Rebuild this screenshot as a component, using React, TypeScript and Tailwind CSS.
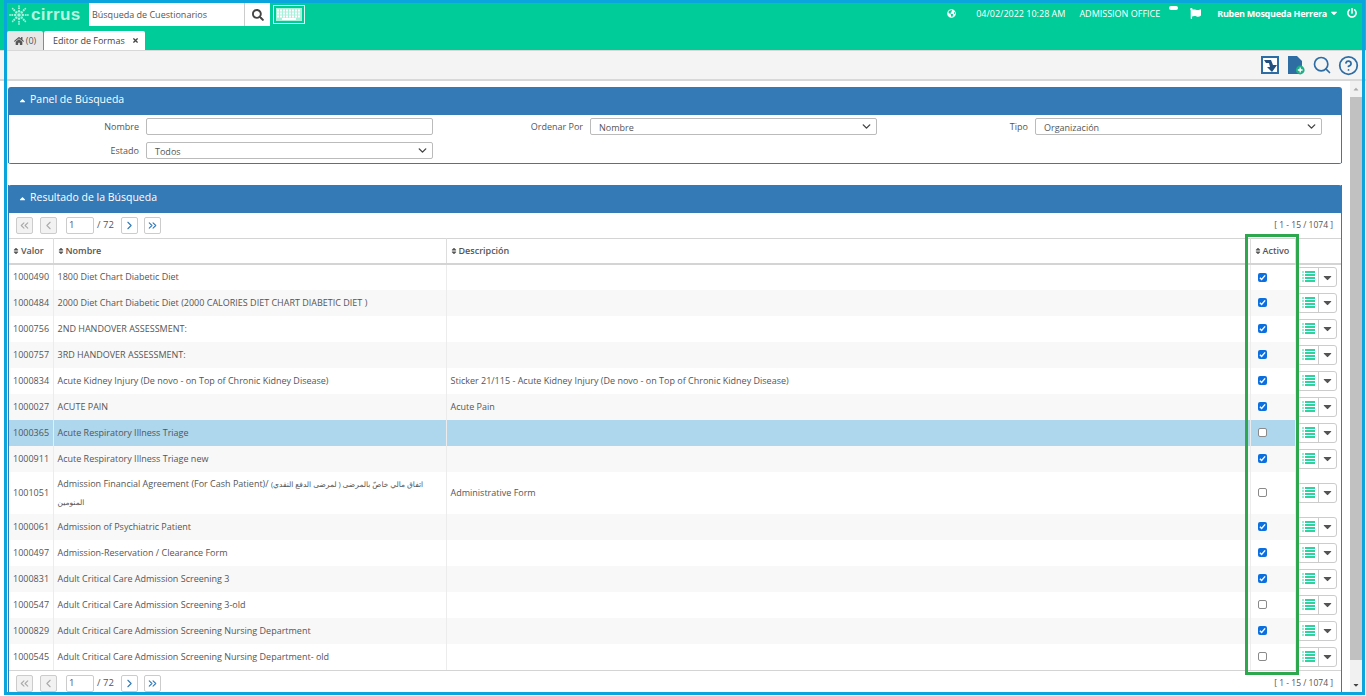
import { FaCaretDown, FaCaretUp, FaFlag, FaGlobeAmericas, FaHome, FaPowerOff, FaSearch, FaSort, FaTimes } from "react-icons/fa";
import { ChevronDown, ChevronLeft, ChevronRight, ChevronsLeft, ChevronsRight, CircleHelp, Search } from "lucide-react";

type Row = { valor: string; nombre: React.ReactNode; desc?: string; activo: boolean; selected?: boolean; tall?: boolean };

const ROWS: Row[] = [
  { valor: "1000490", nombre: "1800 Diet Chart Diabetic Diet", activo: true },
  { valor: "1000484", nombre: "2000 Diet Chart Diabetic Diet (2000 CALORIES DIET CHART DIABETIC DIET )", activo: true },
  { valor: "1000756", nombre: "2ND HANDOVER ASSESSMENT:", activo: true },
  { valor: "1000757", nombre: "3RD HANDOVER ASSESSMENT:", activo: true },
  {
    valor: "1000834",
    nombre: "Acute Kidney Injury (De novo - on Top of Chronic Kidney Disease)",
    desc: "Sticker 21/115 - Acute Kidney Injury (De novo - on Top of Chronic Kidney Disease)",
    activo: true,
  },
  { valor: "1000027", nombre: "ACUTE PAIN", desc: "Acute Pain", activo: true },
  { valor: "1000365", nombre: "Acute Respiratory Illness Triage", activo: false, selected: true },
  { valor: "1000911", nombre: "Acute Respiratory Illness Triage new", activo: true },
  {
    valor: "1001051",
    nombre: (
      <>
        Admission Financial Agreement (For Cash Patient)/ <span className="text-[7.5px]">اتفاق مالي خاصّ بالمرضى ( لمرضى الدفع النقدي)</span>
        <br />
        <span className="text-[7.5px]">المنومين</span>
      </>
    ),
    desc: "Administrative Form",
    activo: false,
    tall: true,
  },
  { valor: "1000061", nombre: "Admission of Psychiatric Patient", activo: true },
  { valor: "1000497", nombre: "Admission-Reservation / Clearance Form", activo: true },
  { valor: "1000831", nombre: "Adult Critical Care Admission Screening 3", activo: true },
  { valor: "1000547", nombre: "Adult Critical Care Admission Screening 3-old", activo: false },
  { valor: "1000829", nombre: "Adult Critical Care Admission Screening Nursing Department", activo: true },
  { valor: "1000545", nombre: "Adult Critical Care Admission Screening Nursing Department- old", activo: false },
];

function CirrusMark() {
  const spokes = [0, 45, 90, 135, 180, 225, 270, 315];
  return (
    <svg width="20" height="20" viewBox="0 0 22 22" fill="#a6f2dc">
      <circle cx="11" cy="11" r="2" />
      {spokes.map((a) => (
        <g key={a} transform={`rotate(${a} 11 11)`}>
          <circle cx="11" cy="6.8" r="1.4" />
          <circle cx="11" cy="3.6" r="1.2" />
          <circle cx="11" cy="1.2" r="1" />
        </g>
      ))}
    </svg>
  );
}

function KeyboardIcon() {
  return (
    <svg width="32" height="19" viewBox="0 0 32 19">
      <rect x="0.5" y="0.5" width="31" height="18" fill="none" stroke="#d9fff3" strokeWidth="1" />
      <rect x="3" y="3" width="26" height="13" fill="#a8f0da" />
      {[4.5, 7.5, 10.5].map((y) =>
        [4, 7, 10, 13, 16, 19, 22, 25].map((x) => (
          <rect key={`${x}-${y}`} x={x} y={y} width="2" height="2" fill="#fff" />
        ))
      )}
      <rect x="9" y="13" width="14" height="2" fill="#fff" />
    </svg>
  );
}

function LoadIcon() {
  return (
    <svg width="18" height="18" viewBox="0 0 18 18">
      <rect x="1" y="1" width="16" height="16" fill="#fff" stroke="#2e6da4" strokeWidth="2" />
      <path d="M3 4h7l2 5h4l-5 7-5-5h3l-1-4H5z" fill="#24507f" />
    </svg>
  );
}

function NewFormIcon() {
  return (
    <svg width="18" height="19" viewBox="0 0 18 19">
      <path d="M1 0h9l5 5v13H1z" fill="#2e6da4" />
      <circle cx="13.2" cy="14" r="4.4" fill="#1fae85" />
      <path d="M13.2 11.6v4.8M10.8 14h4.8" stroke="#fff" strokeWidth="1.3" />
    </svg>
  );
}

function ListIcon() {
  return (
    <svg width="13" height="12" viewBox="0 0 13 12">
      {[0, 3, 6, 9].map((y) => (
        <g key={y}>
          <rect x="0" y={y} width="2" height="2" fill="#9debd2" />
          <rect x="3" y={y} width="10" height="2" fill="#2fd3a0" />
        </g>
      ))}
    </svg>
  );
}

function Check({ on }: { on: boolean }) {
  return on ? (
    <span className="inline-flex h-[9px] w-[9px] items-center justify-center rounded-[2px] bg-[#0b6fe0]">
      <svg width="7" height="7" viewBox="0 0 8 8" fill="none" stroke="#fff" strokeWidth="1.6">
        <path d="M1 4.2l2 2L7 1.6" />
      </svg>
    </span>
  ) : (
    <span className="inline-block h-[9px] w-[9px] rounded-[2px] border border-[#8a8a8a] bg-white" />
  );
}

function PagerButton({ children, muted }: { children: React.ReactNode; muted?: boolean }) {
  return (
    <span
      className={`flex h-[17px] w-[17px] items-center justify-center rounded-[2px] border border-[#ccc] ${
        muted ? "bg-[#f2f2f2] text-[#aaa]" : "bg-white text-[#337ab7]"
      }`}
    >
      {children}
    </span>
  );
}

function Pager() {
  return (
    <div className="flex h-full items-center justify-between pl-[7px] pr-[8px]">
      <div className="flex items-center">
        <PagerButton muted><ChevronsLeft size={13} /></PagerButton>
        <span className="w-[7px]" />
        <PagerButton muted><ChevronLeft size={13} /></PagerButton>
        <span className="ml-[9px] flex h-[17px] w-[28px] items-center rounded-[2px] border border-[#ccc] bg-white pl-[2px] text-[9.5px] text-[#555]">1</span>
        <span className="ml-[3px] w-[16px] text-[9.5px] whitespace-nowrap text-[#555]">/ 72</span>
        <span className="w-[8px]" />
        <PagerButton><ChevronRight size={13} /></PagerButton>
        <span className="w-[6px]" />
        <PagerButton><ChevronsRight size={13} /></PagerButton>
      </div>
      <span className="text-[8.5px] text-[#555]">[ 1 - 15 / 1074 ]</span>
    </div>
  );
}

function PanelHeader({ title }: { title: string }) {
  return (
    <div className="flex h-[28px] items-center gap-[3px] rounded-t-[3px] bg-[#337ab7] pb-[2px] pl-[10px] text-[10.5px] text-white">
      <FaCaretUp size={9} />
      <span>{title}</span>
    </div>
  );
}

function SelectBox({ label, width }: { label: string; width: string }) {
  return (
    <div className={`flex h-[17px] items-center justify-between rounded-[2px] border border-[#bbb] bg-white pl-[8px] pr-[3px] text-[9px] text-[#555] ${width}`}>
      <span className="pt-[2px]">{label}</span>
      <ChevronDown size={13} strokeWidth={2.6} className="text-[#444]" />
    </div>
  );
}

function HeadCell({ label }: { label?: string }) {
  return (
    <th className="border-r border-[#ddd] pl-[3px] text-left text-[9px] font-semibold text-[#555]">
      {label && (
        <span className="flex items-center gap-[1px]">
          <FaSort size={8} className="text-[#555]" />
          {label}
        </span>
      )}
    </th>
  );
}

export default function App() {
  return (
    <div className="relative h-[696px] w-[1366px] overflow-hidden bg-white font-['Open_Sans','DejaVu_Sans',sans-serif] text-[#555]">
      {/* green header with tabs */}
      <header className="h-[50px] bg-[#00cc99]">
        <div className="flex h-[31px] items-start justify-between pl-[9px] pr-[9px]">
          <div className="flex items-center pt-[3px]">
            <CirrusMark />
            <span className="ml-[2px] w-[59px] font-['Liberation_Sans',sans-serif] text-[17px] leading-[22px] font-bold tracking-[0.4px] text-[#b5f5e0]">cirrus</span>
            <div className="-ml-px flex h-[23px] w-[181px] items-center bg-white">
              <span className="w-[156px] border-r border-[#ccc] pl-[3px] text-[9px] leading-[23px] text-[#555]">Búsqueda de Cuestionarios</span>
              <span className="flex flex-1 items-center justify-center text-[#444]"><FaSearch size={12} /></span>
            </div>
            <span className="ml-[3px] flex"><KeyboardIcon /></span>
          </div>
          <div className="flex items-center pt-[6px] text-[9px] leading-[13px] text-white">
            <FaGlobeAmericas size={9} />
            <span className="ml-[20px]">04/02/2022 10:28 AM</span>
            <span className="ml-[14px]">ADMISSION OFFICE</span>
            <span className="mb-[10px] ml-[9px] h-[4px] w-[9px] rounded-full bg-white" />
            <FaFlag size={11} className="ml-[12px]" />
            <span className="ml-[16px] text-[9px] font-bold tracking-[-0.25px]">Ruben Mosqueda Herrera</span>
            <FaCaretDown size={10} className="ml-[2px]" />
            <FaPowerOff size={10} className="ml-[8px]" />
          </div>
        </div>
        <div className="flex h-[19px] items-end pl-[7px] text-[9px]">
          <div className="flex h-[19px] w-[36px] items-center justify-center gap-[2px] rounded-t-[2px] bg-[#e8e8e8] text-[#555]">
            <FaHome size={10} />
            <span>(0)</span>
          </div>
          <div className="ml-[1px] flex h-[19px] w-[101px] items-center rounded-t-[2px] bg-white pl-[9px] text-[#444]">
            Editor de Formas
            <FaTimes size={7} className="ml-[7px]" />
          </div>
        </div>
      </header>

      {/* toolbar */}
      <div className="flex h-[31px] items-center justify-end border-y border-b-[2px] border-[#d8d8d8] bg-[#f4f4f4] pr-[7px]">
        <LoadIcon />
        <span className="w-[8px]" />
        <NewFormIcon />
        <span className="w-[7px]" />
        <Search size={20} strokeWidth={2} className="text-[#2e6da4]" />
        <span className="w-[6px]" />
        <CircleHelp size={21} strokeWidth={2} className="text-[#2e6da4]" />
      </div>

      <div className="flex h-[615px]">
        <main className="w-[1350px] pt-[6px] pl-[8px] pr-[8px]">
          {/* search panel */}
          <section className="h-[77px] rounded-b-[3px] border-b border-[#337ab7]">
            <PanelHeader title="Panel de Búsqueda" />
            <div className="h-[48px] border-x border-[#337ab7] pt-[3px] text-[9px]">
              <div className="flex h-[17px] items-center">
                <span className="w-[137px] pr-[7px] text-right">Nombre</span>
                <div className="h-[17px] w-[287px] rounded-[2px] border border-[#bbb] bg-white" />
                <span className="w-[157px] pr-[7px] text-right">Ordenar Por</span>
                <SelectBox label="Nombre" width="w-[287px]" />
                <span className="w-[158px] pr-[7px] text-right">Tipo</span>
                <SelectBox label="Organización" width="w-[287px]" />
              </div>
              <div className="mt-[7px] flex h-[17px] items-center">
                <span className="w-[137px] pr-[7px] text-right">Estado</span>
                <SelectBox label="Todos" width="w-[287px]" />
              </div>
            </div>
          </section>

          {/* results panel */}
          <section className="mt-[21px] h-[508px] border-x border-[#337ab7]">
            <div className="-mx-px">
              <PanelHeader title="Resultado de la Búsqueda" />
            </div>
            <div className="h-[25px]"><Pager /></div>
            <table className="w-full table-fixed border-collapse text-[9px]">
              <colgroup>
                <col className="w-[44px]" />
                <col className="w-[393px]" />
                <col className="w-[804px]" />
                <col className="w-[45px]" />
                <col />
              </colgroup>
              <thead>
                <tr className="h-[25px] border-y border-y-[#d4d4d4] border-b-[2px] bg-white">
                  <HeadCell label="Valor" />
                  <HeadCell label="Nombre" />
                  <HeadCell label="Descripción" />
                  <HeadCell label="Activo" />
                  <th />
                </tr>
              </thead>
              <tbody>
                {ROWS.map((r, i) => (
                  <tr
                    key={r.valor}
                    className={`${r.tall ? "h-[42px]" : "h-[26px]"} ${
                      r.selected ? "bg-[#aed6ec]" : i % 2 === 1 ? "bg-[#f8f8f8]" : "bg-white"
                    }`}
                  >
                    <td className="border-r border-[#ececec] pl-[4px] text-[#555]">{r.valor}</td>
                    <td className={`border-r border-[#ececec] pl-[4px] text-[#555] ${r.tall ? "leading-[18px]" : ""}`}>{r.nombre}</td>
                    <td className="border-r border-[#ececec] pl-[4px] text-[#555]">{r.desc}</td>
                    <td className="border-r border-[#ececec] pl-[7px]">
                      <span className="flex"><Check on={r.activo} /></span>
                    </td>
                    <td className="bg-white pl-px">
                      <span className="flex h-[20px] w-[40px] overflow-hidden rounded-[3px] border border-[#ccc] bg-white">
                        <span className="flex w-[21px] items-center justify-center border-r border-[#ccc] pl-[1px]"><ListIcon /></span>
                        <span className="flex flex-1 items-center justify-center text-[#555]"><FaCaretDown size={13} /></span>
                      </span>
                    </td>
                  </tr>
                ))}
              </tbody>
            </table>
            <div className="h-[26px] border-t border-[#d4d4d4]"><Pager /></div>
          </section>
        </main>

        {/* page scrollbar */}
        <aside className="flex w-[12px] flex-col bg-[#f1f1f1]">
          <span className="flex h-[16px] items-center justify-center text-[#aaa]"><FaCaretUp size={8} /></span>
          <div className="h-[563px] bg-[#c1c1c1]" />
          <span className="mt-auto mb-[3px] flex h-[16px] items-center justify-center text-[#444]"><FaCaretDown size={8} /></span>
        </aside>
      </div>

      {/* annotation overlays drawn on the screenshot */}
      <div className="pointer-events-none absolute top-0 right-px bottom-px left-[4px] border-[3px] border-[#0aa5dc]" />
      <div className="pointer-events-none absolute top-[234px] left-[1245px] h-[441px] w-[54px] border-[3px] border-[#2ea84f]" />
    </div>
  );
}
